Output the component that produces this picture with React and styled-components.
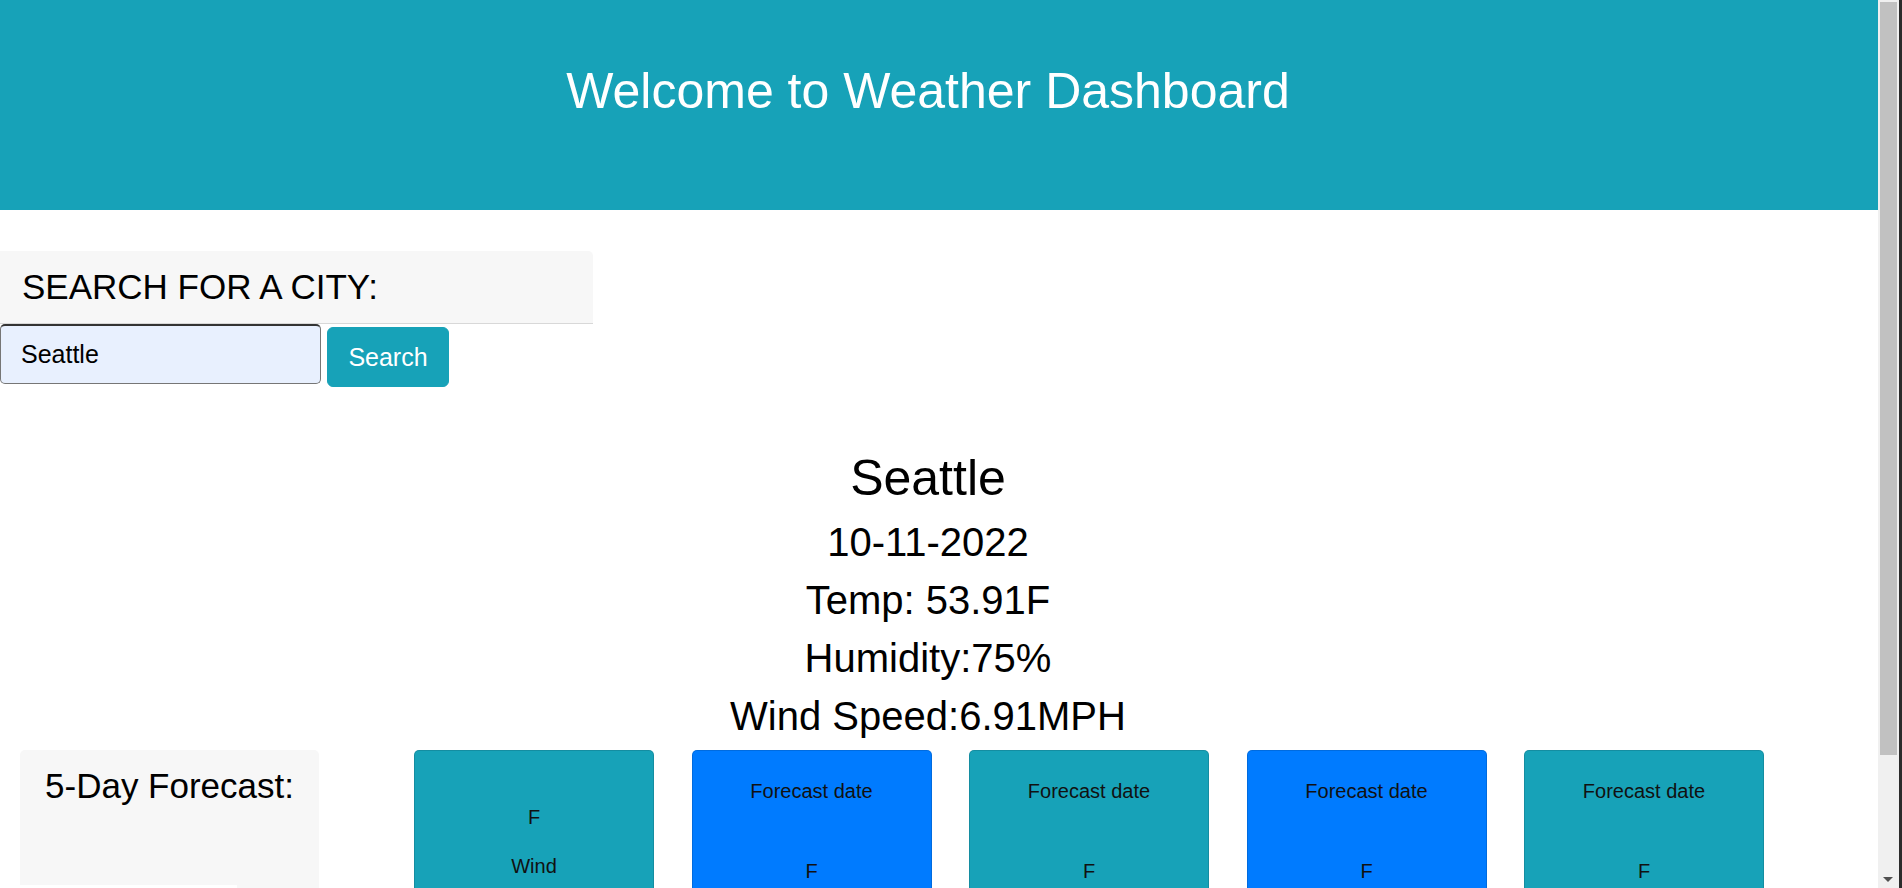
import React from 'react';
import styled, { createGlobalStyle } from 'styled-components';

const GlobalStyle = createGlobalStyle`
  html, body {
    margin: 0;
    padding: 0;
    font-family: "Liberation Sans", Arial, sans-serif;
    font-size: 20px;
    color: #212529;
    background: #fff;
  }
`;

const Page = styled.div`
  width: calc(100% - 24px);
  padding-bottom: 20px;
`;

/* stands in for the browser scrollbar seen in the screenshot */
const ScrollTrack = styled.div`
  position: fixed;
  top: 0;
  right: 0;
  bottom: 0;
  width: 21px;
  background: #f0f0f0;
  border-right: 3px solid #2b2b2b;
`;

const ScrollThumb = styled.div`
  margin: 2px 2px 0;
  height: 753px;
  background: #c1c1c1;
`;

const ScrollArrow = styled.div`
  position: absolute;
  left: 5px;
  bottom: 6px;
  width: 0;
  height: 0;
  border-left: 5px solid transparent;
  border-right: 5px solid transparent;
  border-top: 5px solid #505050;
`;

const Header = styled.header`
  height: 210px;
  box-sizing: border-box;
  padding: 61px 22px 0 0;
  background: #17a2b8;
  text-align: center;
`;

const Title = styled.h1`
  margin: 0;
  font-size: 50px;
  line-height: 60px;
  font-weight: 400;
  color: #fff;
`;

const SearchCard = styled.section`
  width: 593px;
  margin-top: 41px;
`;

const SearchHeader = styled.h3`
  margin: 0;
  padding: 15px 22px;
  background: #f7f7f7;
  border-bottom: 1px solid rgba(0, 0, 0, 0.125);
  border-top-right-radius: 5px;
  font-size: 35px;
  line-height: 42px;
  font-weight: 400;
  color: #000;
`;

const SearchRow = styled.form`
  display: flex;
  align-items: flex-start;
  gap: 6px;
`;

const CityInput = styled.input`
  width: 321px;
  height: 60px;
  box-sizing: border-box;
  padding: 10px 20px;
  background: #e8f0fe;
  border: 1px solid #767676;
  border-top: 2px solid #333;
  border-radius: 5px;
  font-family: "Liberation Sans", Arial, sans-serif;
  font-size: 25px;
  color: #000;
  outline: none;
`;

const SearchButton = styled.button`
  margin-top: 3px;
  width: 122px;
  height: 60px;
  padding: 0 20px;
  background: #17a2b8;
  border: 1px solid #17a2b8;
  border-radius: 6px;
  color: #fff;
  font-family: "Liberation Sans", Arial, sans-serif;
  font-size: 25px;
  cursor: pointer;
`;

const Current = styled.section`
  margin-top: 61px;
  padding-right: 22px;
  text-align: center;
  color: #000;
`;

const CityName = styled.h1`
  margin: 0 0 10px;
  font-size: 50px;
  line-height: 60px;
  font-weight: 400;
`;

const Detail = styled.h2`
  margin: 0 0 10px;
  font-size: 40px;
  line-height: 48px;
  font-weight: 400;
`;

const ForecastRow = styled.section`
  display: flex;
  align-items: flex-start;
  padding-left: 20px;
`;

const ForecastPanel = styled.div`
  width: 299px;
  height: 300px;
  padding-top: 15px;
  box-sizing: border-box;
  background: #f7f7f7;
  border-radius: 5px;
  text-align: center;
`;

const PanelTitle = styled.h3`
  margin: 0;
  font-size: 35px;
  line-height: 42px;
  font-weight: 400;
  color: #000;
`;

const HistoryItem = styled.div`
  width: 217px;
  height: 50px;
  margin-top: 78px;
  background: #fff;
`;

const CardList = styled.div`
  display: flex;
  gap: 37.5px;
  margin-left: 95px;
`;

const ForecastCard = styled.div`
  width: 240px;
  min-height: 270px;
  box-sizing: border-box;
  padding: 25px;
  background: ${(p) => p.$bg};
  border: 1px solid rgba(0, 0, 0, 0.125);
  border-radius: 5px;
  text-align: center;
`;

const CardLine = styled.p`
  margin: ${(p) => p.$gap}px 0 0;
  font-size: 20px;
  line-height: 30px;
  color: #111;
`;

const TEAL = '#17a2b8';
const BLUE = '#007bff';

const forecast = [
  { bg: TEAL, lines: [{ text: 'F', gap: 26 }, { text: 'Wind', gap: 19 }] },
  { bg: BLUE, lines: [{ text: 'Forecast date', gap: 0 }, { text: 'F', gap: 50 }] },
  { bg: TEAL, lines: [{ text: 'Forecast date', gap: 0 }, { text: 'F', gap: 50 }] },
  { bg: BLUE, lines: [{ text: 'Forecast date', gap: 0 }, { text: 'F', gap: 50 }] },
  { bg: TEAL, lines: [{ text: 'Forecast date', gap: 0 }, { text: 'F', gap: 50 }] },
];

const App = () => {
  return (
    <>
      <GlobalStyle />
      <Page>
        <Header>
          <Title>Welcome to Weather Dashboard</Title>
        </Header>

        <SearchCard>
          <SearchHeader>SEARCH FOR A CITY:</SearchHeader>
          <SearchRow onSubmit={(e) => e.preventDefault()}>
            <CityInput type="text" defaultValue="Seattle" />
            <SearchButton type="submit">Search</SearchButton>
          </SearchRow>
        </SearchCard>

        <Current>
          <CityName>Seattle</CityName>
          <Detail>10-11-2022</Detail>
          <Detail>Temp: 53.91F</Detail>
          <Detail>Humidity:75%</Detail>
          <Detail>Wind Speed:6.91MPH</Detail>
        </Current>

        <ForecastRow>
          <ForecastPanel>
            <PanelTitle>5-Day Forecast:</PanelTitle>
            <HistoryItem />
          </ForecastPanel>
          <CardList>
            {forecast.map((day, i) => (
              <ForecastCard key={i} $bg={day.bg}>
                {day.lines.map((line, j) => (
                  <CardLine key={j} $gap={line.gap}>{line.text}</CardLine>
                ))}
              </ForecastCard>
            ))}
          </CardList>
        </ForecastRow>
      </Page>
      <ScrollTrack>
        <ScrollThumb />
        <ScrollArrow />
      </ScrollTrack>
    </>
  );
};

export default App;
